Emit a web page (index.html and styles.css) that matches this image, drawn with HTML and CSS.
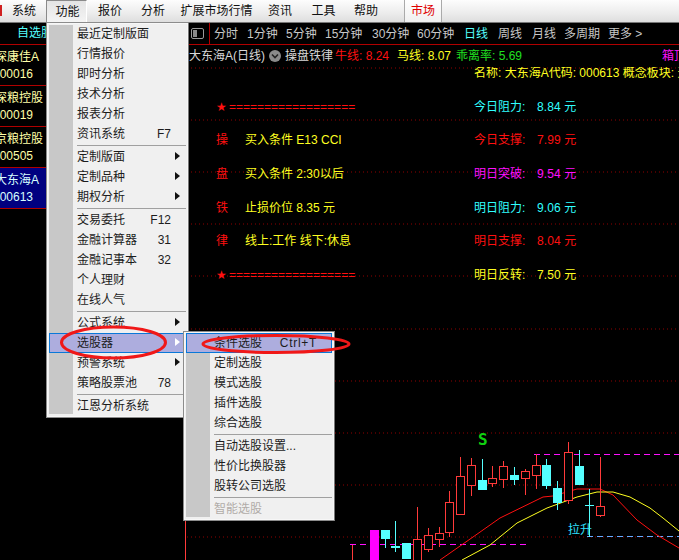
FILE: index.html
```html
<!DOCTYPE html>
<html lang="zh">
<head>
<meta charset="utf-8">
<title>功能菜单</title>
<link rel="stylesheet" href="styles.css">
</head>
<body>
<div class="app">
  <header class="menubar">
    <span class="logo-bit"></span>
    <span class="mi w-sys">系统</span>
    <span class="mi w-fn active">功能</span>
    <span class="mi w-quote">报价</span>
    <span class="mi w-an">分析</span>
    <span class="mi w-ext">扩展市场行情</span>
    <span class="mi w-an">资讯</span>
    <span class="mi w-tool">工具</span>
    <span class="mi w-help">帮助</span>
    <span class="mi market">市场</span>
  </header>
  <div class="body">
    <aside class="side">
      <div class="side-head">自选股</div>
      <div class="stock"><div class="s-name">深康佳A</div><div class="s-code">000016</div></div>
      <div class="stock"><div class="s-name">深粮控股</div><div class="s-code">000019</div></div>
      <div class="stock"><div class="s-name">京粮控股</div><div class="s-code">000505</div></div>
      <div class="stock sel"><div class="s-name">大东海A</div><div class="s-code">000613</div></div>
    </aside>
    <main class="main">
      <div class="periods">
        <span class="toggle"><i></i></span>
        <span class="p-list">
          <span class="p p1">分时</span><span class="p p2">1分钟</span><span class="p p2">5分钟</span><span class="p p3a">15分钟</span><span class="p p3b">30分钟</span><span class="p p3a">60分钟</span><span class="p p4 on">日线</span><span class="p p4">周线</span><span class="p p5">月线</span><span class="p p6">多周期</span><span class="p">更多 &gt;</span>
        </span>
      </div>
      <div class="info">
        <span class="i-title">大东海A(日线)</span>
        <svg class="i-drop" width="12" height="12" viewBox="0 0 12 12"><circle cx="6" cy="6" r="6" fill="#8a8a8a"/><path d="M3 4.5 6 7.5 9 4.5" fill="none" stroke="#222" stroke-width="1.6"/></svg>
        <span class="i-rule">操盘铁律</span>
        <span class="i-a red">牛线: 8.24</span>
        <span class="i-b yellow">马线: 8.07</span>
        <span class="i-c green">乖离率: 5.69</span>
        <span class="i-d magenta">箱顶</span>
      </div>
      <section class="chart">
        <svg class="plot" width="633" height="493" viewBox="46 67 633 493">
          <g class="grid-lines">
            <line x1="187" x2="679" y1="68" y2="68"/><line x1="187" x2="679" y1="120" y2="120"/><line x1="187" x2="679" y1="172" y2="172"/><line x1="187" x2="679" y1="224" y2="224"/><line x1="187" x2="679" y1="276" y2="276"/><line x1="187" x2="679" y1="329" y2="329"/><line x1="187" x2="679" y1="381" y2="381"/><line x1="187" x2="679" y1="433" y2="433"/><line x1="187" x2="679" y1="485" y2="485"/><line x1="187" x2="679" y1="537" y2="537"/>
          </g>
          <line class="dash-m" x1="534" x2="679" y1="454.5" y2="454.5"/>
          <line class="dash-m" x1="350" x2="528" y1="544.5" y2="544.5"/>
          <line class="dash-b" x1="587" x2="679" y1="536.5" y2="536.5"/>
          <polyline class="ma-red" points="440,560 473,537 500,518 543,497 553,496 577,489 600,489 613,495 637,520 657,535 679,548"/>
          <polyline class="ma-yel" points="462,560 490,545 517,523 547,508 577,497 597,492 613,492 630,497 650,508 663,518 679,531"/>
          <g class="wick-r">
            <line x1="185.5" x2="185.5" y1="521" y2="560"/><line x1="352.5" x2="352.5" y1="545" y2="560"/>
            <line x1="417.5" x2="417.5" y1="507" y2="539"/><line x1="428.5" x2="428.5" y1="528" y2="552"/><line x1="439.5" x2="439.5" y1="527" y2="547"/><line x1="449.5" x2="449.5" y1="491" y2="537"/><line x1="460.5" x2="460.5" y1="457" y2="476"/><line x1="471.5" x2="471.5" y1="458" y2="496"/><line x1="492.5" x2="492.5" y1="466" y2="487"/><line x1="503.5" x2="503.5" y1="461" y2="488"/><line x1="525.5" x2="525.5" y1="469" y2="495"/><line x1="536.5" x2="536.5" y1="454" y2="489"/><line x1="568.5" x2="568.5" y1="442" y2="504"/><line x1="600.5" x2="600.5" y1="457" y2="517"/>
          </g>
          <g class="wick-c">
            <line x1="385.5" x2="385.5" y1="539" y2="548"/><line x1="395.5" x2="395.5" y1="521" y2="552"/><line x1="482.5" x2="482.5" y1="459" y2="480"/><line x1="514.5" x2="514.5" y1="467" y2="485"/><line x1="546.5" x2="546.5" y1="459" y2="489"/><line x1="557.5" x2="557.5" y1="481" y2="510"/><line x1="579.5" x2="579.5" y1="450" y2="466"/><line x1="589.5" x2="589.5" y1="489" y2="537"/><line x1="585" x2="594" y1="505.5" y2="505.5"/>
          </g>
          <g class="body-r">
            <rect x="413.5" y="539.5" width="8" height="22"/><rect x="424.5" y="535.5" width="8" height="14"/><rect x="435.5" y="533.5" width="8" height="6"/><rect x="445.5" y="502.5" width="8" height="30"/><rect x="456.5" y="476.5" width="8" height="38"/><rect x="467.5" y="465.5" width="8" height="20"/><rect x="488.5" y="478.5" width="8" height="5"/><rect x="499.5" y="466.5" width="8" height="13"/><rect x="521.5" y="471.5" width="8" height="7"/><rect x="532.5" y="465.5" width="8" height="10"/><rect x="564.5" y="452.5" width="8" height="48"/><rect x="596.5" y="506.5" width="8" height="9"/>
          </g>
          <g class="body-c">
            <rect x="381" y="530" width="9" height="9"/><rect x="391" y="546" width="9" height="2"/><rect x="402" y="543" width="9" height="16"/><rect x="478" y="480" width="9" height="10"/><rect x="510" y="475" width="9" height="5"/><rect x="542" y="465" width="9" height="21"/><rect x="553" y="488" width="9" height="15"/><rect x="575" y="466" width="9" height="19"/>
          </g>
          <rect class="body-m" x="370" y="530" width="9" height="30"/>
        </svg>
        <div class="notes">
          <div class="name-row">名称: 大东海A代码: 000613 概念板块: 天</div>
          <div class="levels">
            <div class="l-left red"><span class="star">★</span><span class="eq">==================</span></div>
            <div class="l-right cyan"><span class="lab">今日阻力:</span><span class="val">8.84 元</span></div>
            <div class="l-left"><span class="tag red">操</span><span class="yellow">买入条件 E13 CCI</span></div>
            <div class="l-right red"><span class="lab">今日支撑:</span><span class="val">7.99 元</span></div>
            <div class="l-left"><span class="tag red">盘</span><span class="yellow">买入条件 2:30以后</span></div>
            <div class="l-right magenta"><span class="lab">明日突破:</span><span class="val">9.54 元</span></div>
            <div class="l-left"><span class="tag red">铁</span><span class="yellow">止损价位 8.35 元</span></div>
            <div class="l-right cyan"><span class="lab">明日阻力:</span><span class="val">9.06 元</span></div>
            <div class="l-left"><span class="tag red">律</span><span class="yellow">线上:工作 线下:休息</span></div>
            <div class="l-right red"><span class="lab">明日支撑:</span><span class="val">8.04 元</span></div>
            <div class="l-left red"><span class="star">★</span><span class="eq">==================</span></div>
            <div class="l-right yellow"><span class="lab">明日反转:</span><span class="val">7.50 元</span></div>
          </div>
        </div>
        <span class="mark-s">S</span>
        <span class="mark-up">拉升</span>
      </section>
    </main>
  </div>

  <nav class="menu menu-main">
    <div class="mrow">最近定制版面</div>
    <div class="mrow">行情报价</div>
    <div class="mrow">即时分析</div>
    <div class="mrow">技术分析</div>
    <div class="mrow">报表分析</div>
    <div class="mrow">资讯系统<kbd>F7</kbd></div>
    <div class="msep"></div>
    <div class="mrow arrow">定制版面</div>
    <div class="mrow arrow">定制品种</div>
    <div class="mrow arrow">期权分析</div>
    <div class="msep"></div>
    <div class="mrow">交易委托<kbd>F12</kbd></div>
    <div class="mrow">金融计算器<kbd>31</kbd></div>
    <div class="mrow">金融记事本<kbd>32</kbd></div>
    <div class="mrow">个人理财</div>
    <div class="mrow">在线人气</div>
    <div class="msep"></div>
    <div class="mrow arrow">公式系统</div>
    <div class="mrow arrow hot">选股器</div>
    <div class="mrow arrow">预警系统</div>
    <div class="mrow">策略股票池<kbd>78</kbd></div>
    <div class="msep"></div>
    <div class="mrow">江恩分析系统</div>
  </nav>
  <nav class="menu menu-sub">
    <div class="mrow hot">条件选股<kbd class="wide">Ctrl+T</kbd></div>
    <div class="mrow">定制选股</div>
    <div class="mrow">模式选股</div>
    <div class="mrow">插件选股</div>
    <div class="mrow">综合选股</div>
    <div class="msep"></div>
    <div class="mrow">自动选股设置...</div>
    <div class="mrow">性价比换股器</div>
    <div class="mrow">股转公司选股</div>
    <div class="msep"></div>
    <div class="mrow off">智能选股</div>
  </nav>
  <svg class="marks" width="679" height="560" viewBox="0 0 679 560">
    <ellipse cx="113.5" cy="342.5" rx="52" ry="15.5"/>
    <ellipse cx="276" cy="344" rx="73" ry="8.5"/>
  </svg>
</div>
</body>
</html>
```
FILE: styles.css
```css
* { box-sizing: border-box; }
html, body { margin: 0; padding: 0; background: #000; }
body {
  width: 679px;
  height: 560px;
  overflow: hidden;
  font: 12px/1 "Liberation Sans", "Noto Sans CJK SC", sans-serif;
  color: #111;
}
.app { position: relative; width: 679px; height: 560px; overflow: hidden; display: flex; flex-direction: column; }

/* menu bar */
.menubar {
  height: 23px;
  flex: none;
  display: flex;
  align-items: stretch;
  position: relative;
  background: linear-gradient(#fdfdfd, #ececec 60%, #dedede);
  border-bottom: 1px solid #777;
  padding-left: 2px;
}
.logo-bit { position: absolute; left: 0; top: 5px; width: 2px; height: 11px; background: #d02020; }
.mi { display: flex; align-items: center; justify-content: center; padding-bottom: 1px; flex: none; }
.w-sys { width: 44px; }
.w-fn { width: 41px; }
.w-quote { width: 46px; }
.w-an { width: 40px; }
.w-ext { width: 87px; }
.w-tool { width: 47px; }
.w-help { width: 38px; }
.active {
  background: linear-gradient(#e4e4e4, #f4f4f4);
  border: 1px solid #8a8a8a;
  border-right-color: #fff;
  border-bottom: 0;
  padding-top: 2px;
  padding-left: 2px;
}
.market {
  width: 38px;
  margin-left: 19px;
  color: #e00000;
  border-left: 1px solid #aaa;
  border-right: 1px solid #aaa;
  background: linear-gradient(#fff, #f0f0f0);
}

.body { flex: 1; display: flex; min-height: 0; }

/* left list */
.side { width: 46px; flex: none; overflow: hidden; }
.side-head {
  height: 22px;
  line-height: 21px;
  padding-left: 17px;
  color: #55ffff;
  white-space: nowrap;
  border-bottom: 1px solid #b00000;
}
.stock {
  height: 41px;
  padding-top: 6px;
  border-bottom: 1px solid #b00000;
  color: #ffffa8;
  white-space: nowrap;
}
.s-name { margin-left: -5px; height: 17px; }
.s-code { margin-left: -7px; }
.sel { background: #000080; color: #d8ffff; }

/* main */
.main { flex: 1; min-width: 0; display: flex; flex-direction: column; }
.periods {
  height: 22px;
  flex: none;
  display: flex;
  align-items: center;
  padding-left: 145px;
  border-bottom: 1px solid #b00000;
  color: #c8c8c8;
  white-space: nowrap;
}
.toggle { width: 13px; height: 11px; border: 1px solid #9a9a9a; border-radius: 2px; padding: 1px; display: block; flex: none; }
.toggle i { display: block; width: 4px; height: 7px; background: #8a8a8a; }
.p-list { display: flex; height: 21px; align-items: center; margin-left: 5px; padding-left: 4px; border-left: 1px solid #b00000; }
.p { flex: none; }
.p1 { width: 33px; }
.p2 { width: 39px; }
.p3a { width: 47px; }
.p3b { width: 45px; }
.p4 { width: 34px; }
.p5 { width: 32px; }
.p6 { width: 44px; }
.on { color: #55ffff; }

.info {
  height: 22px;
  flex: none;
  display: flex;
  align-items: center;
  padding-left: 143px;
  color: #d8d8d8;
  white-space: nowrap;
}
.info > * { flex: none; }
.i-title { width: 80px; }
.i-rule { margin-left: 4px; width: 50px; }
.i-a { width: 62px; }
.i-b { width: 59px; }
.i-c { width: 206px; }

.red { color: #ff1010; }
.yellow { color: #ffff20; }
.green { color: #20e020; }
.cyan { color: #30ffff; }
.magenta { color: #ff10ff; }

/* chart */
.chart { flex: 1; position: relative; min-height: 0; }
.plot { position: absolute; left: 0; top: 0; display: block; }
.grid-lines line { stroke: #900000; stroke-width: 1; stroke-dasharray: 1 3; }
.dash-m { stroke: #ff10ff; stroke-width: 1; stroke-dasharray: 6 4; }
.dash-b { stroke: #66aaff; stroke-width: 1; stroke-dasharray: 6 4; }
.ma-red { fill: none; stroke: #ff1010; stroke-width: 1; }
.ma-yel { fill: none; stroke: #ffff20; stroke-width: 1; }
.wick-r line { stroke: #ff3a3a; stroke-width: 1; }
.wick-c line { stroke: #55ffff; stroke-width: 1; }
.body-r rect { fill: #000; stroke: #ff3a3a; stroke-width: 1; }
.body-c rect { fill: #55ffff; }
.body-m { fill: #ff00ff; }

.notes { position: relative; padding-left: 170px; white-space: nowrap; overflow: hidden; width: 633px; }
.name-row { margin-left: 258px; color: #ffff20; height: 23px; line-height: 12px; }
.levels { display: grid; grid-template-columns: 258px auto; grid-auto-rows: 33.6px; align-items: center; }
.l-left { display: flex; align-items: center; }
.l-right { display: flex; align-items: center; }
.star { width: 13px; font: 12px/1 "DejaVu Sans", sans-serif; }
.eq { line-height: 12px; }
.tag { width: 29px; }
.lab { width: 63px; }
.val { letter-spacing: 0.1px; }

.mark-s { position: absolute; left: 432px; top: 365px; color: #10d010; font: bold 16px/1 "DejaVu Sans Mono", monospace; }
.mark-up { position: absolute; left: 522px; top: 457px; color: #30e0ff; }

/* menus */
.menu {
  position: absolute;
  background: #f0f0f0;
  border: 1px solid #8c8c8c;
  border-right-color: #777;
  padding: 1px 2px 4px;
  box-shadow: inset 0 0 0 1px #f7f7f7;
}
.menu::before {
  content: "";
  position: absolute;
  left: 2px;
  top: 2px;
  bottom: 3px;
  width: 24px;
  background: #c8c8c8;
}
.menu-main { left: 46px; top: 22px; width: 143px; height: 396px; }
.menu-sub { left: 183px; top: 331px; width: 152px; height: 190px; }
.mrow {
  position: relative;
  height: 20px;
  display: flex;
  align-items: center;
  justify-content: space-between;
  padding: 0 15px 0 28px;
  white-space: nowrap;
  color: #1c1c1c;
}
.msep { position: relative; height: 3px; margin-left: 28px; }
.msep::after { content: ""; position: absolute; left: 0; right: 0; top: 1px; height: 1px; background: #a0a0a0; }
.arrow::after {
  content: "";
  position: absolute;
  right: 6px;
  top: 5px;
  border-left: 5px solid #111;
  border-top: 4px solid transparent;
  border-bottom: 4px solid transparent;
}
.hot { background: #adadde; box-shadow: inset 0 0 0 1px #0a78d8; }
.arrow.hot::after { border-left-color: #fff; }
.off { color: #b0aca8; }
kbd { font: inherit; }
.wide { letter-spacing: 0.7px; }

.marks { position: absolute; left: 0; top: 0; pointer-events: none; }
.marks ellipse { fill: none; stroke: #f01818; stroke-width: 3; }
```
